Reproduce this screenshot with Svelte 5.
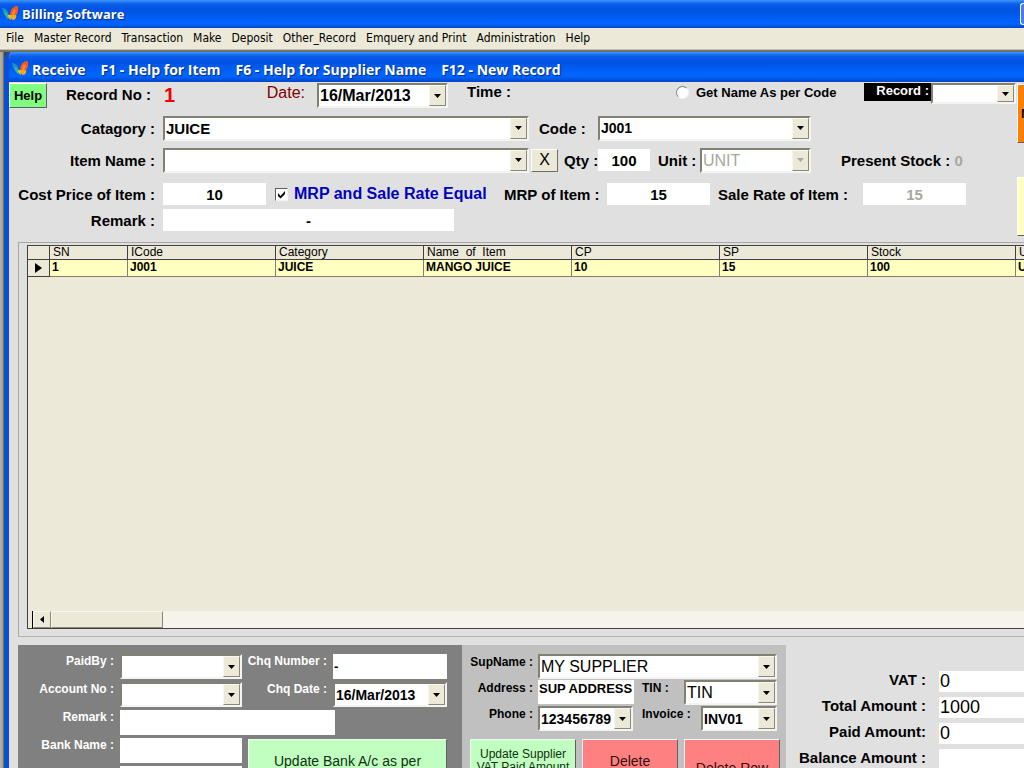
<script lang="ts">
  const menus = [
    'File',
    'Master Record',
    'Transaction',
    'Make',
    'Deposit',
    'Other_Record',
    'Emquery and Print',
    'Administration',
    'Help'
  ]

  const hints = ['Receive', 'F1 - Help for Item', 'F6 - Help for Supplier Name', 'F12 - New Record']

  const columns = ['SN', 'ICode', 'Category', 'Name  of  Item', 'CP', 'SP', 'Stock', 'Unit']

  let rows = $state([['1', 'J001', 'JUICE', 'MANGO JUICE', '10', '15', '100', 'UNIT']])

  let totals = $state([
    { id: 'vat', label: 'VAT :', value: '0' },
    { id: 'total', label: 'Total Amount :', value: '1000' },
    { id: 'paid', label: 'Paid Amount:', value: '0' },
    { id: 'balance', label: 'Balance Amount :', value: '' }
  ])

  let equalRate = $state(true)
</script>

{#snippet logo()}
  <svg class="logo" viewBox="0 0 16 16" aria-hidden="true">
    <path d="M0 2 Q4 2 6 6 L7 10 L5 11 Q1 8 0 2 Z" fill="#1c8fc0" />
    <path d="M2 6 Q5 6 7 10 L6 13 Q3 11 2 6 Z" fill="#35b795" />
    <path d="M8 10 Q8 3 12 1 Q15 -1 16 1 Q17 6 14 9 Z" fill="#f25a22" />
    <path d="M11 4 Q14 3 14 5 L12 9 L10 9 Z" fill="#ff8433" />
    <path d="M7 9 L14 9 Q15 12 12 14 Q9 14 7 9 Z" fill="#f9a81e" />
    <path d="M6 9 L8 9 L9 14 Q6 13 6 9 Z" fill="#c8cf45" />
  </svg>
{/snippet}

{#snippet combo(id: string, value: string, size: string, disabled = false)}
  <div class="combo combo--{size}" class:combo--disabled={disabled}>
    <select {id} {disabled}>
      <option>{value}</option>
    </select>
    <span class="combo-arrow">
      <svg viewBox="0 0 7 4" aria-hidden="true"><path d="M0 0 H7 L3.5 4 Z" fill="currentColor" /></svg>
    </span>
  </div>
{/snippet}

<div class="app">
  <header class="titlebar">
    {@render logo()}
    <h1>Billing Software</h1>
    <button class="win-button" aria-label="Minimize"></button>
  </header>

  <nav class="menubar">
    {#each menus as menu}
      <button class="menu">{menu}</button>
    {/each}
  </nav>

  <div class="mdi">
    <main class="child">
      <header class="child-title">
        {@render logo()}
        {#each hints as hint}
          <span>{hint}</span>
        {/each}
      </header>

      <section class="entry">
        <form class="fields">
          <div class="row row--top">
            <button type="button" class="help">Help</button>
            <span class="record-label">Record No :</span>
            <output class="record-no">1</output>
            <label class="date-label" for="date">Date:</label>
            {@render combo('date', '16/Mar/2013', 'date')}
            <span class="time-label">Time :</span>
            <label class="by-code"><input type="radio" name="lookup" />Get Name As per Code</label>
            <label class="record-pick" for="record">Record :</label>
            {@render combo('record', '', 'record')}
          </div>
          <div class="row">
            <label class="lead" for="category">Catagory :</label>
            {@render combo('category', 'JUICE', 'wide')}
            <label class="code-label" for="code">Code :</label>
            {@render combo('code', 'J001', 'code')}
          </div>
          <div class="row">
            <label class="lead" for="item">Item Name :</label>
            {@render combo('item', '', 'wide')}
            <button type="button" class="clear">X</button>
            <label class="qty-label" for="qty">Qty :</label>
            <input id="qty" class="box box--qty" value="100" />
            <label class="unit-label" for="unit">Unit :</label>
            {@render combo('unit', 'UNIT', 'unit', true)}
            <span class="stock">Present Stock : <output>0</output></span>
          </div>
          <div class="row row--price">
            <label class="lead" for="cost">Cost Price of Item :</label>
            <input id="cost" class="box" value="10" />
            <label class="equal"><input type="checkbox" bind:checked={equalRate} />MRP and Sale Rate Equal</label>
            <label class="mrp-label" for="mrp">MRP of Item :</label>
            <input id="mrp" class="box" value="15" />
            <label class="sale-label" for="sale">Sale Rate of Item :</label>
            <input id="sale" class="box" value="15" disabled={equalRate} />
          </div>
          <div class="row row--remark">
            <label class="lead" for="remark">Remark :</label>
            <input id="remark" class="box box--remark" value="-" />
          </div>
        </form>
        <aside class="side">
          <button class="side-button side-button--orange">N</button>
          <button class="side-button side-button--cream" aria-label="Save"></button>
        </aside>
      </section>

      <section class="grid-frame">
        <div class="grid-box">
          <div class="grid-body">
            <table>
              <thead>
                <tr>
                  <th class="marker"></th>
                  {#each columns as column, i}
                    <th class:narrow={i === 0}>{column}</th>
                  {/each}
                </tr>
              </thead>
              <tbody>
                {#each rows as row}
                  <tr>
                    <td class="marker">
                      <svg viewBox="0 0 7 10" aria-hidden="true"><path d="M0 0 L7 5 L0 10 Z" /></svg>
                    </td>
                    {#each row as cell}
                      <td>{cell}</td>
                    {/each}
                  </tr>
                {/each}
              </tbody>
            </table>
          </div>
          <div class="scrollbar">
            <button class="scroll-left" aria-label="Scroll left">
              <svg viewBox="0 0 4 7" aria-hidden="true"><path d="M4 0 V7 L0 3.5 Z" /></svg>
            </button>
            <div class="scroll-thumb"></div>
          </div>
        </div>
      </section>

      <footer class="footer">
        <div class="bank">
          <label for="paidby">PaidBy :</label>
          {@render combo('paidby', '', 'fill')}
          <label class="chq-label" for="chqno">Chq Number :</label>
          <input id="chqno" class="text" value="-" />

          <label for="account">Account No :</label>
          {@render combo('account', '', 'fill')}
          <label class="chq-label" for="chqdate">Chq Date :</label>
          {@render combo('chqdate', '16/Mar/2013', 'fill')}

          <label for="bankremark">Remark :</label>
          <input id="bankremark" class="text text--remark" />

          <label for="bankname">Bank Name :</label>
          <input id="bankname" class="text" />
          <button class="action action--green action--bank">Update Bank A/c as per</button>

          <label for="branch">Bank Branch :</label>
          <input id="branch" class="text" />
        </div>

        <div class="supplier">
          <div class="sup-row">
            <label class="sup-lead" for="supname">SupName :</label>
            {@render combo('supname', 'MY SUPPLIER', 'supplier')}
          </div>
          <div class="sup-row">
            <label class="sup-lead" for="address">Address :</label>
            <input id="address" class="text text--address" value="SUP ADDRESS" />
            <label class="tin-label" for="tin">TIN :</label>
            {@render combo('tin', 'TIN', 'tin')}
          </div>
          <div class="sup-row">
            <label class="sup-lead" for="phone">Phone :</label>
            {@render combo('phone', '123456789', 'phone')}
            <label class="invoice-label" for="invoice">Invoice :</label>
            {@render combo('invoice', 'INV01', 'invoice')}
          </div>
          <div class="sup-actions">
            <button class="action action--green action--small">Update Supplier<br />VAT Paid Amount</button>
            <button class="action action--red">Delete</button>
            <button class="action action--red action--low">Delete Row</button>
          </div>
        </div>

        <div class="totals">
          {#each totals as total (total.id)}
            <label for={total.id}>{total.label}</label>
            <input id={total.id} class="text text--total" bind:value={total.value} />
          {/each}
        </div>
      </footer>
    </main>
  </div>
</div>

<style>
  :global(body) {
    overflow: hidden;
  }

  .app {
    display: flex;
    flex-direction: column;
    height: 100vh;
    overflow: hidden;
    background: #e0e0e0;
    color: #000;
    font-family: "Liberation Sans", Arial, sans-serif;
    font-size: 15px;
    font-weight: bold;
    white-space: nowrap;
  }

  .app * {
    box-sizing: border-box;
  }

  button,
  input,
  select {
    margin: 0;
    padding: 0;
    font: inherit;
    color: inherit;
    border-radius: 0;
  }

  .titlebar,
  .child-title {
    display: flex;
    align-items: center;
    flex-shrink: 0;
    color: #fff;
    font-family: "Open Sans", "Noto Sans", sans-serif;
    text-shadow: 1px 1px 1px #0a2a80;
    background: linear-gradient(#3d95ff 0, #0a5eea 4px, #0053e1 10px, #0061fb 20px, #0066ff 24px, #0046c8 100%);
  }

  .titlebar {
    height: 28px;
    padding-left: 2px;
    gap: 4px;
  }

  .titlebar h1 {
    flex: 1;
    margin: 0;
    font-size: 13px;
  }

  .logo {
    width: 16px;
    height: 16px;
    flex-shrink: 0;
  }

  .win-button {
    width: 4px;
    height: 22px;
    background: #4a7cf0;
    border: 1px solid #fff;
    border-right: none;
    border-radius: 3px 0 0 3px;
  }

  .menubar {
    display: flex;
    flex-shrink: 0;
    gap: 10px;
    height: 21px;
    padding: 0 0 2px 6px;
    background: #ece9d8;
  }

  .menu {
    border: none;
    background: none;
    font-family: "DejaVu Sans Condensed", "DejaVu Sans", sans-serif;
    font-size: 12px;
    font-weight: normal;
  }

  .mdi {
    display: flex;
    flex: 1;
    min-height: 0;
    padding: 3px 0 0 4px;
    background: linear-gradient(#fff 0, #808080 1px, #70705e 2px, #70705e 3px, transparent 3px), linear-gradient(90deg, #b8b4a4 0, #a09c8c 3px, #48483c 4px);
  }

  .child {
    display: flex;
    flex: 1;
    flex-direction: column;
    min-width: 0;
    background: #e0e0e0;
    border-left: 5px solid #0a4fd8;
    border-top-left-radius: 8px;
    overflow: hidden;
  }

  .child-title {
    gap: 15px;
    height: 30px;
    padding: 4px 0 0 3px;
    font-size: 14px;
  }

  .child-title .logo {
    margin-right: -11px;
  }

  .entry {
    display: flex;
    flex-shrink: 0;
    height: 160px;
  }

  .fields {
    flex: 1;
    min-width: 0;
    overflow: hidden;
  }

  .row {
    display: flex;
    align-items: center;
    height: 32px;
  }

  .row--top {
    height: 30px;
    align-items: flex-start;
    padding-top: 1px;
  }

  .row--price {
    height: 36px;
  }

  .row--remark {
    height: 16px;
  }

  .lead {
    width: 154px;
    padding-right: 8px;
    text-align: right;
    flex-shrink: 0;
  }

  .help {
    width: 38px;
    height: 25px;
    font-size: 13px;
    background: #80ff80;
    border: 1px solid;
    border-color: #fff #606060 #606060 #fff;
  }

  .record-label {
    width: 98px;
    margin-left: 19px;
    padding-top: 3px;
  }

  .record-no {
    width: 92px;
    color: #f00000;
    font-size: 20px;
    line-height: 25px;
  }

  .date-label {
    width: 61px;
    padding-top: 1px;
    padding-right: 12px;
    color: #800000;
    font-size: 16px;
    font-weight: normal;
    text-align: right;
  }

  .time-label {
    width: 209px;
    margin-left: 19px;
  }

  .by-code {
    display: flex;
    align-items: center;
    width: 188px;
    height: 18px;
    font-size: 13px;
  }

  .by-code input {
    width: 13px;
    height: 13px;
    margin-right: 7px;
    appearance: none;
    background: #fff;
    border: 1px solid;
    border-color: #808080 #f4f4f4 #f4f4f4 #808080;
    border-radius: 50%;
  }

  .record-pick {
    width: 67px;
    height: 18px;
    padding-right: 2px;
    background: #000;
    color: #fff;
    font-size: 13px;
    line-height: 16px;
    text-align: right;
  }

  .code-label {
    width: 69px;
    padding-left: 10px;
  }

  .clear {
    width: 27px;
    height: 23px;
    margin-left: 2px;
    background: #ece9d8;
    border: 1px solid;
    border-color: #fff #716f64 #716f64 #fff;
    font-size: 16px;
    font-weight: normal;
  }

  .qty-label {
    width: 40px;
    padding-left: 6px;
  }

  .unit-label {
    width: 50px;
    padding-left: 8px;
  }

  .stock {
    margin-left: 30px;
  }

  .stock output {
    color: #a8a89c;
  }

  .equal {
    display: flex;
    align-items: center;
    width: 238px;
    padding-left: 9px;
    color: #0000c0;
    font-size: 16px;
  }

  .equal input {
    width: 13px;
    height: 13px;
    margin-right: 6px;
    appearance: none;
    border: 1px solid;
    border-color: #606060 #f4f4f4 #f4f4f4 #606060;
    background: #fff;
  }

  .equal input:checked {
    background: #fff url("data:image/svg+xml,%3Csvg xmlns='http://www.w3.org/2000/svg' viewBox='0 0 11 11'%3E%3Cpath d='M2 4 L4.5 7 L9 2 V5 L4.5 9.500 L2 7 Z'/%3E%3C/svg%3E");
  }

  .mrp-label {
    width: 103px;
  }

  .sale-label {
    width: 153px;
    padding-left: 8px;
  }

  .box {
    width: 103px;
    height: 22px;
    background: #fff;
    border: none;
    font-size: 15px;
    text-align: center;
  }

  .box:disabled {
    color: #a8a89c;
  }

  .box--qty {
    width: 52px;
  }

  .box--remark {
    width: 291px;
  }

  .combo {
    display: grid;
    grid-template-columns: 1fr 17px;
    flex-shrink: 0;
    height: 25px;
    background: #fff;
    border: 2px solid;
    border-color: #808074 #f4f4f0 #f4f4f0 #808074;
  }

  .combo select {
    grid-area: 1 / 1 / 2 / 3;
    width: 100%;
    min-width: 0;
    padding-left: 1px;
    appearance: none;
    background: none;
    border: none;
    opacity: 1;
  }

  .combo-arrow {
    display: grid;
    grid-area: 1 / 2;
    place-items: center;
    background: #ece9d8;
    border: 1px solid;
    border-color: #f8f6ee #8a887a #8a887a #f8f6ee;
    pointer-events: none;
  }

  .combo-arrow svg {
    width: 7px;
    height: 4px;
  }

  .combo--disabled {
    color: #a8a89c;
  }

  .combo--disabled select {
    font-weight: normal;
  }

  .combo--date {
    width: 131px;
    font-size: 16px;
  }

  .combo--record {
    width: 85px;
    height: 21px;
  }

  .combo--wide {
    width: 366px;
  }

  .combo--code {
    width: 213px;
    font-size: 14px;
  }

  .combo--unit {
    width: 111px;
    font-size: 16px;
  }

  .combo--fill {
    font-size: 14px;
  }

  .combo--supplier {
    width: 239px;
    font-size: 16px;
  }

  .combo--supplier select,
  .combo--tin select {
    font-weight: normal;
  }

  .combo--tin {
    width: 93px;
    font-size: 16px;
  }

  .combo--phone {
    width: 95px;
    font-size: 14px;
  }

  .combo--invoice {
    width: 76px;
    font-size: 14px;
  }

  .side {
    display: flex;
    flex-direction: column;
    gap: 34px;
    width: 7px;
    padding-top: 2px;
    overflow: hidden;
  }

  .side-button {
    width: 90px;
    height: 59px;
    padding-left: 3px;
    flex-shrink: 0;
    border: 1px solid;
    border-color: #fff #606060 #606060 #fff;
    font-size: 13px;
    text-align: left;
  }

  .side-button--orange {
    background: #ff8000;
  }

  .side-button--cream {
    background: #ffffc0;
  }

  .grid-frame {
    display: flex;
    flex: 1;
    min-height: 0;
    margin-left: 9px;
    padding: 2px 0 7px 8px;
    border: 1px solid #a8a8a0;
    border-right: none;
    border-bottom-color: #b4b4ac;
  }

  .grid-box {
    display: flex;
    flex: 1;
    flex-direction: column;
    min-width: 0;
    background: #ece9d8;
    border: 1px solid #404040;
    border-right: none;
  }

  .grid-body {
    flex: 1;
    min-height: 0;
    overflow: hidden;
  }

  table {
    width: 1135px;
    table-layout: fixed;
    border-collapse: separate;
    border-spacing: 0;
    font-size: 12px;
    line-height: 13px;
  }

  th,
  td {
    width: 148px;
    height: 14px;
    padding: 0 2px;
    border-right: 1px solid #404040;
    border-bottom: 1px solid #404040;
    text-align: left;
    white-space: pre;
    overflow: hidden;
  }

  th {
    padding: 0 3px;
    font-weight: normal;
  }

  td {
    height: 17px;
    padding-bottom: 2px;
    background: #ffffc0;
    border-color: #808074;
  }

  th.narrow {
    width: 78px;
  }

  .marker {
    width: 22px;
    padding: 0 7px;
    background: #ece9d8;
    border-color: #404040;
  }

  .marker svg {
    display: block;
    width: 7px;
    height: 10px;
  }

  .scrollbar {
    display: flex;
    flex-shrink: 0;
    height: 17px;
    margin-left: 4px;
    background: #f5f3ea;
    border-left: 1px solid #000;
  }

  .scroll-left,
  .scroll-thumb {
    background: #ece9d8;
    border: 1px solid;
    border-color: #f8f6ee #8a887a #8a887a #f8f6ee;
  }

  .scroll-left {
    display: grid;
    place-items: center;
    width: 18px;
  }

  .scroll-left svg {
    width: 4px;
    height: 7px;
  }

  .scroll-thumb {
    width: 112px;
  }

  .footer {
    display: flex;
    flex-shrink: 0;
    height: 131px;
    padding: 8px 0 0 9px;
    overflow: hidden;
    font-size: 12px;
  }

  .bank {
    display: grid;
    grid-template-columns: 102px 122px 91px 114px;
    grid-auto-rows: 28px;
    align-items: start;
    width: 444px;
    padding-top: 9px;
    flex-shrink: 0;
    background: #808080;
    color: #fff;
  }

  .bank label {
    padding-right: 6px;
    text-align: right;
    line-height: 15px;
  }

  .bank :is(select, input) {
    color: #000;
  }

  .bank .combo-arrow {
    color: #000;
  }

  .bank .text {
    width: 100%;
  }

  .bank .text--remark {
    grid-column: span 3;
    width: 215px;
  }

  .text {
    height: 25px;
    padding-left: 1px;
    background: #fff;
    border: none;
    font-size: 13px;
  }

  .action {
    border: 1px solid;
    border-color: #f4f4f4 #606060 #606060 #f4f4f4;
    font-weight: normal;
    font-size: 14px;
    color: #301010;
  }

  .action--green {
    background: #c0ffc0;
    color: #103010;
  }

  .action--red {
    background: #ff8080;
  }

  .action--bank {
    grid-column: 3 / 5;
    grid-row: 4 / 6;
    height: 44px;
    margin-left: 6px;
    margin-top: 1px;
  }

  .supplier {
    width: 324px;
    padding-top: 9px;
    flex-shrink: 0;
    background: #c0c0c0;
  }

  .sup-row {
    display: flex;
    align-items: flex-start;
    height: 26px;
    line-height: 16px;
  }

  .sup-lead {
    width: 76px;
    padding-right: 5px;
    text-align: right;
  }

  .text--address {
    width: 96px;
    height: 24px;
    padding-bottom: 8px;
    font-size: 13px;
  }

  .tin-label {
    width: 50px;
    padding-left: 8px;
  }

  .invoice-label {
    width: 68px;
    padding-left: 9px;
  }

  .sup-actions {
    display: grid;
    grid-template-columns: 106px 96px 96px;
    gap: 6px;
    padding: 7px 0 0 8px;
  }

  .action--small {
    height: 44px;
    font-size: 12px;
    line-height: 13px;
  }

  .action--low {
    padding-top: 14px;
  }

  .totals {
    display: grid;
    flex: 1;
    grid-template-columns: 140px 1fr;
    grid-auto-rows: 26px;
    column-gap: 13px;
    padding-top: 26px;
    font-size: 15px;
    text-align: right;
    line-height: 18px;
  }

  .text--total {
    min-width: 0;
    height: 21px;
    font-size: 18px;
    font-weight: normal;
  }
</style>
